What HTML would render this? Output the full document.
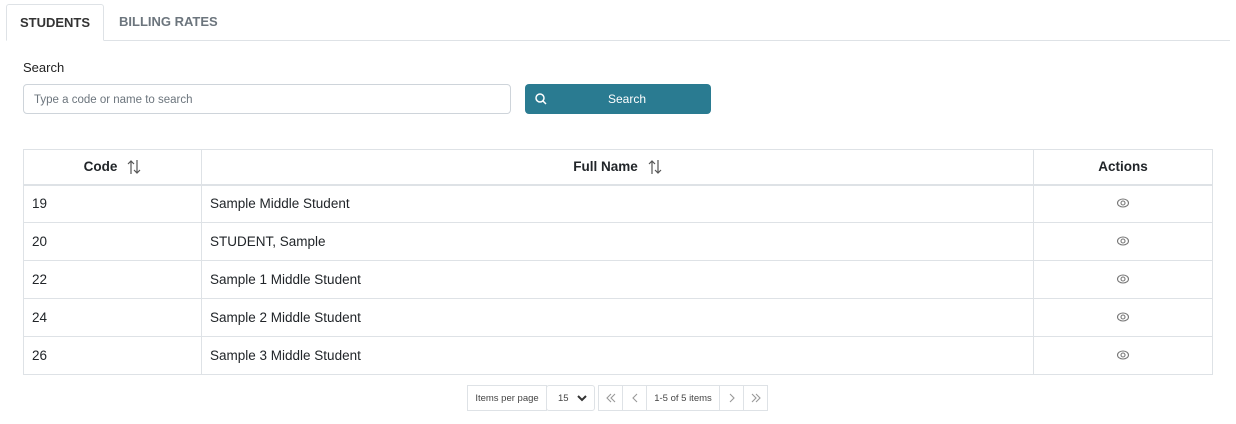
<!DOCTYPE html>
<html><head><style>
*{box-sizing:border-box;margin:0;padding:0}
body{width:1236px;height:424px;background:#fff;font-family:"Liberation Sans",sans-serif;color:#212529;position:relative;overflow:hidden}
.a{position:absolute}
.tabline{left:6px;top:40px;width:1224px;height:1px;background:#dee2e6}
.tab1{left:6px;top:4px;width:98px;height:37px;border:1px solid #dee2e6;border-bottom:1px solid #fff;border-radius:3px 3px 0 0;background:#fff;font-size:13px;font-weight:bold;color:#333;text-align:center;line-height:35px}
.tab2{left:119px;top:4px;height:36px;line-height:35px;font-size:13px;font-weight:bold;color:#6c757d}
.lbl{left:23px;top:60px;font-size:13px;color:#222}
.inp{left:23px;top:84px;width:488px;height:30px;border:1px solid #ced4da;border-radius:4px;font-size:11.5px;color:#6c757d;padding-left:10px;line-height:30px}
.btn{left:525px;top:84px;width:186px;height:30px;background:#2a7b91;border-radius:4px;color:#fff;font-size:12px;line-height:31px;text-align:center;padding-left:18px}
table{position:absolute;left:23px;top:149px;width:1190px;border-collapse:collapse;font-size:13.5px}
td,th{border:1px solid #dee2e6;height:38px;padding:0 8px}
th{height:35px;border-bottom:2px solid #dee2e6;font-weight:bold;font-size:13.5px}
.sort{display:inline-block;vertical-align:middle;margin-left:10px}
.pg{top:385px;height:26px;border:1px solid #dee2e6;font-size:9.5px;color:#444;line-height:25px;text-align:center;background:#fff}
.pg svg{position:absolute;left:6px;top:7px}
</style></head><body>
<div class="a tabline"></div>
<div class="a tab1">STUDENTS</div>
<div class="a tab2">BILLING RATES</div>
<div class="a lbl">Search</div>
<div class="a inp">Type a code or name to search</div>
<div class="a btn"><svg class="a" style="left:10px;top:9px" width="12" height="12" viewBox="0 0 12 12"><circle cx="5" cy="5" r="4" fill="none" stroke="#fff" stroke-width="1.5"/><line x1="8" y1="8" x2="11" y2="11" stroke="#fff" stroke-width="1.5"/></svg>Search</div>
<table>
<tr><th style="width:178px">Code<svg class="sort" width="14" height="16" viewBox="0 0 14 16"><g fill="none" stroke="#555" stroke-width="1.2"><path d="M4 15V2M1 5l3-3 3 3M10 1v13M7 11l3 3 3-3"/></g></svg></th><th>Full Name<svg class="sort" width="14" height="16" viewBox="0 0 14 16"><g fill="none" stroke="#555" stroke-width="1.2"><path d="M4 15V2M1 5l3-3 3 3M10 1v13M7 11l3 3 3-3"/></g></svg></th><th style="width:179px">Actions</th></tr>
<tr><td>19</td><td>Sample Middle Student</td><td></td></tr>
<tr><td>20</td><td>STUDENT, Sample</td><td></td></tr>
<tr><td>22</td><td>Sample 1 Middle Student</td><td></td></tr>
<tr><td>24</td><td>Sample 2 Middle Student</td><td></td></tr>
<tr><td>26</td><td>Sample 3 Middle Student</td><td></td></tr>
</table>
<svg class="a" style="left:1116px;top:197px" width="14" height="180" viewBox="0 0 14 180">
<g fill="none" stroke="#777" stroke-width="1.1">
<g><ellipse cx="7" cy="6" rx="5.5" ry="4"/><circle cx="7" cy="6" r="2"/></g>
<g transform="translate(0,38)"><ellipse cx="7" cy="6" rx="5.5" ry="4"/><circle cx="7" cy="6" r="2"/></g>
<g transform="translate(0,76)"><ellipse cx="7" cy="6" rx="5.5" ry="4"/><circle cx="7" cy="6" r="2"/></g>
<g transform="translate(0,114)"><ellipse cx="7" cy="6" rx="5.5" ry="4"/><circle cx="7" cy="6" r="2"/></g>
<g transform="translate(0,152)"><ellipse cx="7" cy="6" rx="5.5" ry="4"/><circle cx="7" cy="6" r="2"/></g>
</g></svg>
<div class="a pg" style="left:467px;width:80px">Items per page</div>
<div class="a pg" style="left:546px;width:49px;border-radius:3px;text-align:left;padding-left:11px">15<svg style="left:30px;top:9px" width="10" height="7" viewBox="0 0 10 7"><path d="M1 1l4 4 4-4" fill="none" stroke="#333" stroke-width="2"/></svg></div>
<div class="a pg" style="left:598px;width:25px"><svg width="12" height="10" viewBox="0 0 12 10"><path d="M6 1L2 5l4 4M10 1L6 5l4 4" fill="none" stroke="#999" stroke-width="1.1"/></svg></div>
<div class="a pg" style="left:622px;width:25px"><svg width="12" height="10" viewBox="0 0 12 10"><path d="M8 1L4 5l4 4" fill="none" stroke="#999" stroke-width="1.1"/></svg></div>
<div class="a pg" style="left:646px;width:74px">1-5 of 5 items</div>
<div class="a pg" style="left:719px;width:25px"><svg width="12" height="10" viewBox="0 0 12 10"><path d="M4 1l4 4-4 4" fill="none" stroke="#999" stroke-width="1.1"/></svg></div>
<div class="a pg" style="left:743px;width:25px"><svg width="12" height="10" viewBox="0 0 12 10"><path d="M2 1l4 4-4 4M6 1l4 4-4 4" fill="none" stroke="#999" stroke-width="1.1"/></svg></div>
</body></html>
